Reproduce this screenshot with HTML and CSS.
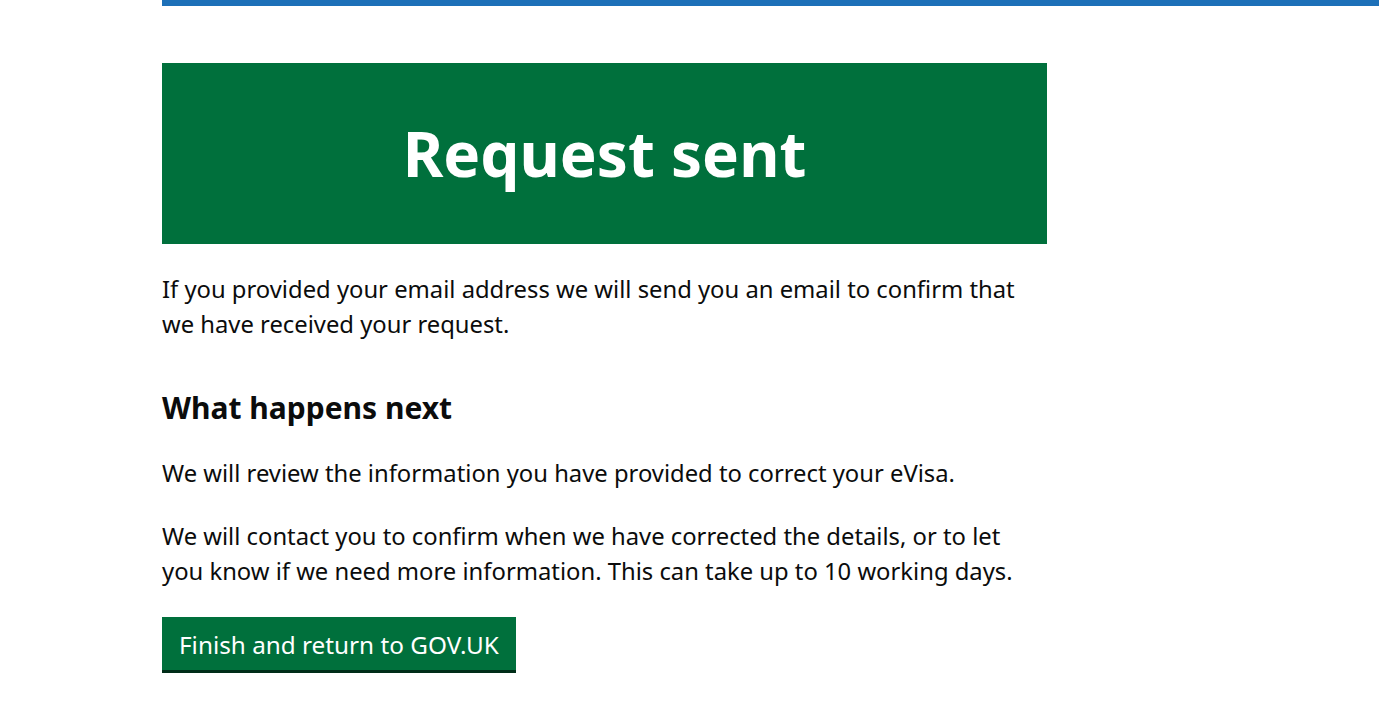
FILE: index.html
```html
<!DOCTYPE html>
<html lang="en">
<head>
<meta charset="utf-8">
<title>Request sent</title>
<link rel="stylesheet" href="styles.css">
</head>
<body>
<div class="page">
  <div class="topbar"></div>
  <main class="main">
    <div class="panel">
      <h1 class="panel-title">Request sent</h1>
    </div>
    <p class="body">If you provided your email address we will send you an email to confirm that we have received your request.</p>
    <h2 class="heading">What happens next</h2>
    <p class="body">We will review the information you have provided to correct your eVisa.</p>
    <p class="body">We will contact you to confirm when we have corrected the details, or to let you know if we need more information. This can take up to 10 working days.</p>
    <a class="button" href="#">Finish and return to GOV.UK</a>
  </main>
</div>
</body>
</html>
```

FILE: styles.css
```css
html, body {
  margin: 0;
  padding: 0;
  background: #ffffff;
}

body {
  font-family: "Noto Sans", "Open Sans", "Liberation Sans", sans-serif;
  color: #0b0c0c;
}

.page {
  margin-left: 162px;
}

.topbar {
  height: 6px;
  background: #1d70b8;
}

.main {
  width: 885px;
  padding-top: 57px;
  padding-bottom: 40px;
}

.panel {
  background: #00703c;
  color: #ffffff;
  text-align: center;
  padding: 55px 20px 56px;
}

.panel-title {
  margin: 0;
  font-size: 62px;
  line-height: 70px;
  font-weight: 700;
}

.body {
  margin: 0 0 28px;
  font-size: 23.8px;
  line-height: 35px;
  max-width: 862px;
}

.main > .panel + .body {
  margin-top: 28px;
}

.heading {
  margin: 48px 0 31px;
  font-size: 30px;
  line-height: 35px;
  font-weight: 700;
}

.button {
  display: inline-block;
  background: #00703c;
  color: #ffffff;
  text-decoration: none;
  font-size: 24.3px;
  line-height: 31px;
  padding: 12px 17px 10px;
  box-shadow: 0 3px 0 #002d18;
}
```
